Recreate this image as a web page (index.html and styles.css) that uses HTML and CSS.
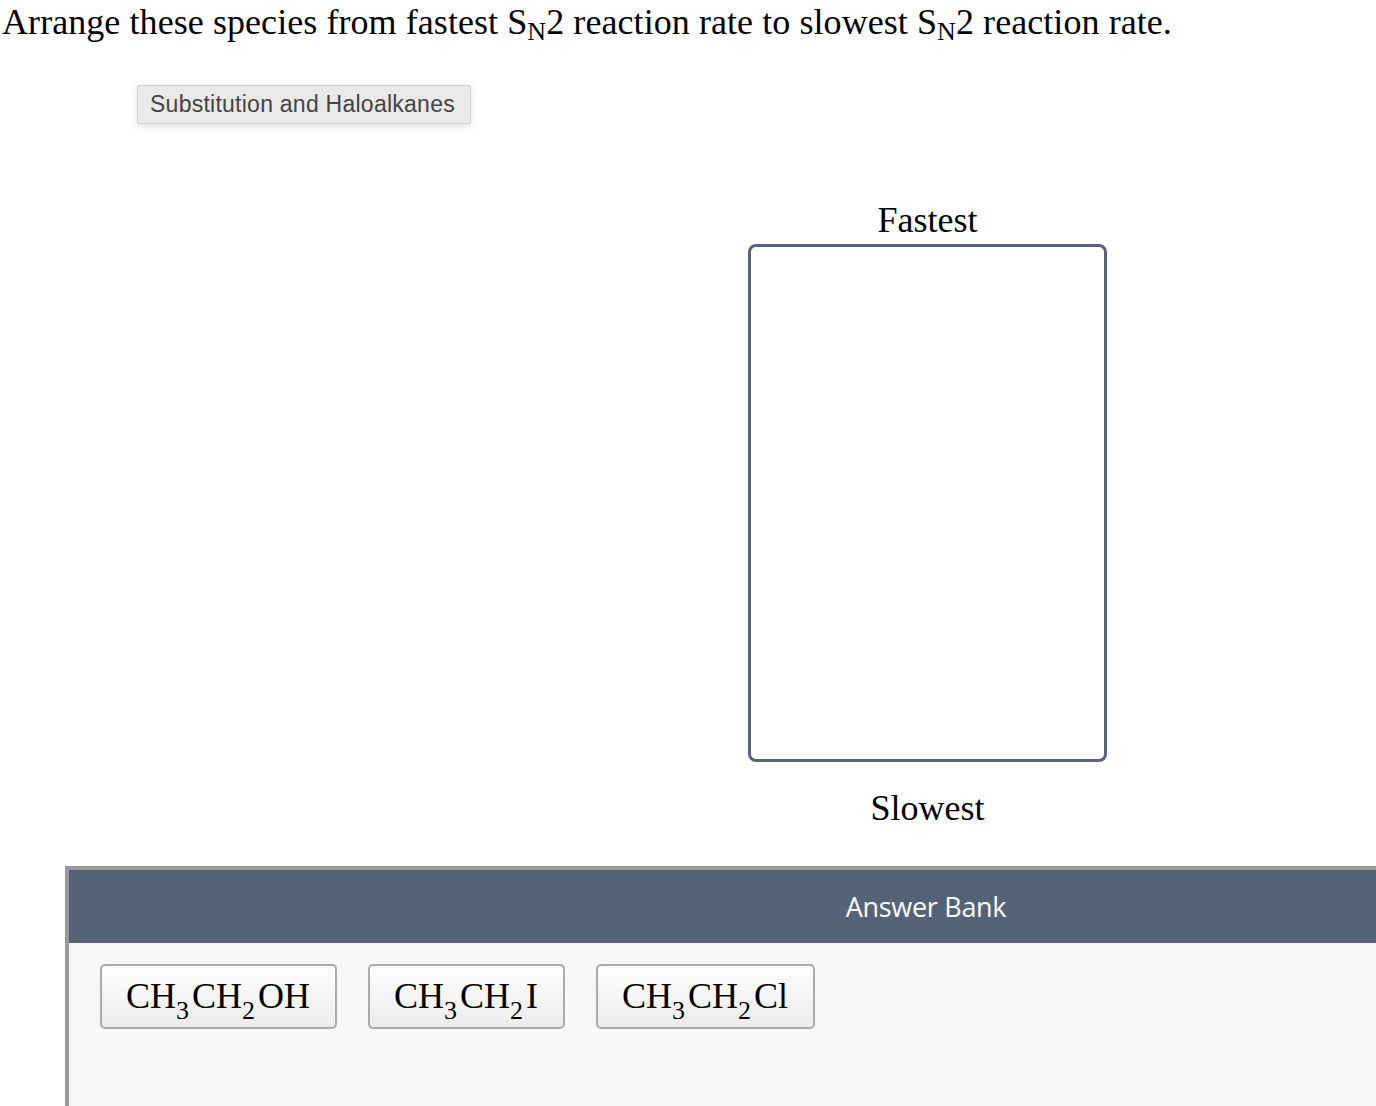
FILE: index.html
```html
<!DOCTYPE html>
<html>
<head>
<meta charset="utf-8">
<link rel="stylesheet" href="styles.css">
</head>
<body>
<div class="page">
  <p class="question">Arrange these species from fastest S<span class="sn">N</span>2 reaction rate to slowest S<span class="sn">N</span>2 reaction rate.</p>
  <div class="tag-row"><span class="tag">Substitution and Haloalkanes</span></div>
  <div class="ranking">
    <div class="rank-col">
      <div class="rank-label top">Fastest</div>
      <div class="drop-box"></div>
      <div class="rank-label bottom">Slowest</div>
    </div>
  </div>
  <div class="bank">
    <div class="bank-header">Answer Bank</div>
    <div class="bank-body">
      <div class="chip">CH<sub>3</sub>CH<sub>2</sub>OH</div>
      <div class="chip">CH<sub>3</sub>CH<sub>2</sub>I</div>
      <div class="chip">CH<sub>3</sub>CH<sub>2</sub>Cl</div>
    </div>
  </div>
</div>
</body>
</html>
```

FILE: styles.css
```css
html, body {
  margin: 0;
  padding: 0;
  background: #ffffff;
  overflow: hidden;
}

.page {
  width: 1376px;
  height: 1106px;
  overflow: hidden;
  font-family: "Liberation Serif", "Times New Roman", serif;
  color: #000;
}

.question {
  margin: 0;
  padding: 2px 0 0 2px;
  font-size: 36px;
  letter-spacing: 0.07px;
  line-height: 40px;
  white-space: nowrap;
}

.sn {
  font-size: 26px;
  position: relative;
  top: 6px;
}

.tag-row {
  padding: 39px 0 0 137px;
  display: flex;
}

.tag {
  display: inline-block;
  font-family: "Liberation Sans", Arial, sans-serif;
  font-size: 23px;
  letter-spacing: 0.25px;
  line-height: 37px;
  padding: 0 15px 0 12px;
  color: #444;
  background: #e9e9e9;
  border: 1px solid #d2d2d2;
  border-radius: 2px;
  box-shadow: 0 2px 8px rgba(0,0,0,0.12);
}

.ranking {
  padding-left: 748px;
  padding-top: 76px;
}

.rank-col {
  width: 359px;
  display: flex;
  flex-direction: column;
  align-items: center;
}

.rank-label {
  font-size: 36px;
  line-height: 40px;
}

.rank-label.top {
  margin-bottom: 4px;
}

.rank-label.bottom {
  margin-top: 26px;
}

.drop-box {
  width: 359px;
  height: 518px;
  box-sizing: border-box;
  border: 3px solid #56637a;
  border-radius: 8px;
  background: #fff;
}

.bank {
  margin-top: 38px;
  margin-left: 65px;
  width: 1714px;
  border-top: 4px solid #999;
  border-left: 4px solid #999;
  background: #f7f7f7;
  height: 400px;
}

.bank-header {
  background: #556378;
  color: #fff;
  font-family: "Open Sans", "Noto Sans", sans-serif;
  font-size: 27px;
  letter-spacing: -0.3px;
  height: 73px;
  line-height: 73px;
  text-align: center;
}

.bank-body {
  display: flex;
  align-items: flex-start;
  gap: 31px;
  padding: 21px 0 0 31px;
}

.chip {
  font-size: 36px;
  line-height: 40px;
  height: 65px;
  box-sizing: border-box;
  padding: 10px 25px 15px 24px;
  border: 2px solid #ababab;
  border-radius: 5px;
  background: linear-gradient(#fdfdfd, #ececec);
  white-space: nowrap;
}

.chip sub {
  font-size: 26px;
  vertical-align: baseline;
  position: relative;
  top: 11px;
  margin-left: 0;
  margin-right: 3px;
}
```
